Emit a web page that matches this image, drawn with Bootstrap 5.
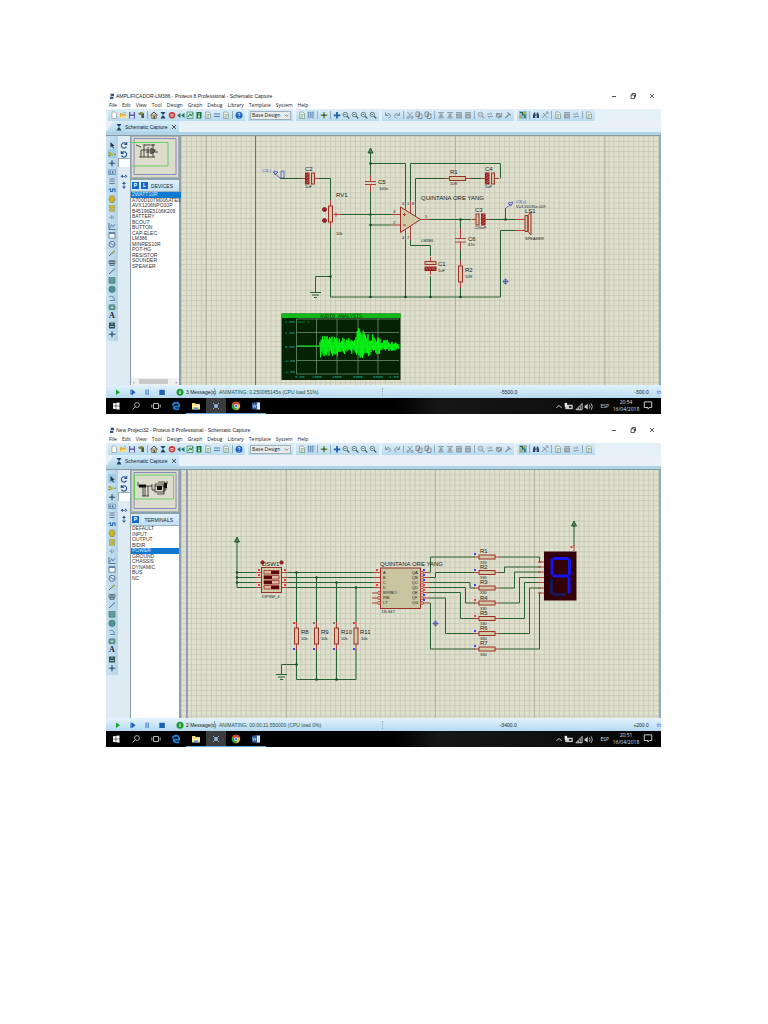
<!DOCTYPE html>
<html lang="en">
<head>
<meta charset="utf-8">
<meta name="viewport" content="width=device-width, initial-scale=1">
<title>Proteus 8 Professional - Schematic Capture</title>
<link href="https://cdn.jsdelivr.net/npm/bootstrap@5.3.0/dist/css/bootstrap.min.css" rel="stylesheet">
<style>
  body { background:#fff; font-family:"Open Sans","Liberation Sans",sans-serif; font-size:5px; line-height:8px; color:#333; }
  .sheet { padding:90px 107px 40px 106px; }
  .win { margin-bottom:10px; }
  .win button { background:none; border:0; padding:0; line-height:0; color:inherit; }
  .win svg { display:block; }
  .titlebar { height:11px; padding-left:2px; padding-right:5px; font-family:"Liberation Sans",sans-serif; color:#222; }
  .titlebar .controls { width:46px; }
  .titlebar .controls svg, .ico { width:8px; height:8px; }
  .menubar { height:8px; padding-left:3px; gap:5px; }
  .menubar a { color:#222; text-decoration:none; }
  .toolbar { height:12px; background:#e6f0f7; gap:3px; padding-left:2px; }
  .tgroup { height:12px; background:linear-gradient(#dcedf8,#b9dbef); padding:0 2px; gap:1px; }
  .tgroup .vr { width:1px; height:8px; min-height:0; align-self:center; margin:0 1px; background:#7f9db3; opacity:.8; }
  .tgroup select { width:41px; height:9px; font-size:5px; line-height:7px; padding:0 1px; border:1px solid #9fb0bb; border-radius:0; background:#e8ebed; color:#222; appearance:none; }
  .picker { position:relative; }
  .picker svg { position:absolute; right:1px; top:1px; pointer-events:none; }
  .win .hot { background:#9ccbe6; }
  .tabrow { height:11px; background:#e8f1f8; }
  .tabrow .doc-tab { width:73px; height:11px; gap:2px; padding-left:9px; background:linear-gradient(#d9edf9,#b4d8ee); clip-path:polygon(8px 0,100% 0,100% 100%,0 100%); font-family:"Liberation Sans",sans-serif; color:#123; }
  .rule { height:4px; background:#b1d3e6; border-bottom:1px solid #8799a3; }
  .work { background:#dfebf3; }
  .rail { width:12px; background:linear-gradient(90deg,#c8e2f1,#b2d4e8); padding:4px 0 3px; align-self:flex-start; }
  .rail button, .orient button { height:9px; }
  .win .letter { font:700 8px/9px "Liberation Serif",serif; color:#222233; }
  .orient { width:12px; padding-top:4px; }
  .orient input { width:12px; height:9px; border:1px solid #9aa9b2; border-right:0; border-bottom:0; padding:0; background:#fff; font-size:5px; }
  .side { width:51px; padding-left:1px; padding-right:2px; background:#8da1ad; }
  .preview { height:42px; background:#dcdccd; border:1px solid #a9b2b4; margin-bottom:2px; }
  .sidehead { height:11px; gap:2px; padding-left:1px; background:linear-gradient(#dff0fb,#bfe0f4); font-family:"Liberation Sans",sans-serif; color:#222; }
  .sidehead button { width:7px; height:7px; background:#1667d0; color:#fff; font-size:5px; line-height:7px; font-weight:700; }
  .sidehead .cap { margin-left:auto; margin-right:6px; }
  .picklist { background:#fff; border-top:1px solid #a4b2ba; }
  .rows { display:grid; grid-auto-rows:1fr; margin:0; padding:0; list-style:none; font-family:"Liberation Sans Narrow","Liberation Sans",sans-serif; font-size:5px; line-height:5px; color:#333; white-space:nowrap; }
  .rows li { padding-left:1px; }
  .rows.n14 { height:77px; }
  .rows.n10 { height:55px; }
  .rows .sel { background:#0f78d0; color:#cfe8ff; }
  .hbar { height:7px; background:#efefef; padding:0 2px; gap:2px; }
  .hbar .thumb { height:5px; background:#c9c9c9; margin-right:5px; margin-left:2px; }
  .plan { border-right:2px solid #8fadc4; background:#dedfcd; min-width:0; }
  .plan svg { width:100%; height:auto; }
  .statusbar { height:13px; background:linear-gradient(#e3f2fc,#b5d9ef); color:#222; font-family:"Liberation Sans Narrow","Liberation Sans",sans-serif; white-space:nowrap; }
  .runner { width:70px; padding-left:8px; padding-right:10px; }
  .msgs { width:39px; gap:2px; border-right:1px dotted #8fa6b5; }
  .anim { width:168px; padding-left:4px; color:#24533d; border-right:1px dotted #8fa6b5; }
  .taskbar { height:16px; background:linear-gradient(90deg,#000 0,#000 52%,#161616 60%,#101010 80%,#000 100%); color:#ddd; }
  .taskbar .app { width:20px; height:16px; display:flex; align-items:center; justify-content:center; }
  .taskbar .app.open { border-bottom:1px solid #6fa8d6; padding-top:1px; }
  .taskbar .app.front { background:#3a3d40; }
  .taskbar .ico { width:10px; height:10px; }
  .tray { gap:2px; padding-right:8px; }
  .clock { width:30px; line-height:7px; text-align:center; }
  .w { fill:none; stroke:#256333; stroke-width:1; }
  .p { fill:none; stroke:#b04038; stroke-width:1; }
  .b { fill:#d2c9a6; stroke:#9c3028; stroke-width:1; }
  .f { fill:#a31f20; stroke:#8c2020; stroke-width:1; }
  .j { fill:#16502a; }
  .q { fill:none; stroke:#4450b8; stroke-width:.8; }
  .t6 { font:6px "Liberation Sans",sans-serif; fill:#222; }
  .t4 { font:4px "Liberation Sans",sans-serif; fill:#222; }
</style>
</head>
<body>

<svg width="0" height="0" class="position-absolute" aria-hidden="true">
  <defs>
    <pattern id="grid" width="4.97" height="5.13" patternUnits="userSpaceOnUse" x="186" y="141"><path d="M0 .5H5M.5 0V5.2" fill="none" stroke="#c3c4b1" stroke-width=".7"/></pattern>
    <g id="vcc"><path class="w" d="M0 3V6"/><path d="M0 0L2.5 5H-2.5Z" fill="#4d8a58" stroke="#184f28" stroke-width=".9"/></g>
    <g id="gnd"><path class="w" d="M-5.500 0H5.500M-3.500 2.500H3.500M-1.500 5H1.500"/></g>
    <g id="resv"><path class="p" d="M0-14V-8M0 8V14"/><rect class="b" x="-2" y="-8" width="4" height="16"/></g>
    <g id="resh"><path class="p" d="M-13 0H-8M8 0H13"/><rect class="b" x="-8" y="-2" width="16" height="4"/></g>
    <g id="pcap"><path class="p" d="M-9 0H-4M4 0H9"/><rect class="f" x="-4.500" y="-5.500" width="3.500" height="11"/><path d="M-4-3l3-2M-4 0l3-2M-4 3l3-2M-4 5l3-2" stroke="#d8a898" stroke-width=".5"/><rect class="b" x="1.500" y="-5.500" width="3" height="11"/></g>
    <g id="origin"><circle class="q" r="2"/><path class="q" d="M-3 0H3M0-3V3"/></g>
  </defs>
  <symbol id="i-app" viewBox="0 0 8 8"><path d="M2 1h4v6H2z" fill="#bcd"/><path d="M3 2h3v2H3zM2 5h3v2H2z" fill="#357"/></symbol>
  <symbol id="i-min" viewBox="0 0 8 8"><path d="M2 4.500h4" stroke="#555"/></symbol>
  <symbol id="i-max" viewBox="0 0 8 8"><path d="M2 3h3.500v3.500H2zM3 3V1.500h3.500V5H5.500" fill="none" stroke="#444" stroke-width=".9"/></symbol>
  <symbol id="i-close" viewBox="0 0 8 8"><path d="M2 2l4 4M6 2L2 6" stroke="#444" stroke-width=".9"/></symbol>
  <symbol id="i-down" viewBox="0 0 8 8"><path d="M2 3l2 2 2-2" fill="none" stroke="#555" stroke-width=".8"/></symbol>
  <symbol id="i-new" viewBox="0 0 8 8"><path d="M2 1h3l1.500 1.500V7.500H2z" fill="#fff" stroke="#889" stroke-width=".6"/></symbol>
  <symbol id="i-open" viewBox="0 0 8 8"><path d="M1 2h2l1 1h3v4H1z" fill="#e3b13c"/><path d="M2.500 4.500H8L6.800 7H1z" fill="#ffe38a"/><path d="M4.500 1.500h2v1" stroke="#59a" fill="none" stroke-width=".6"/></symbol>
  <symbol id="i-save" viewBox="0 0 8 8"><path d="M1 1h6v6.500H1z" fill="#5a5bb0"/><path d="M2.300 1h3.500v2.500H2.300zM2 5h4v2.500H2z" fill="#dfe3f6"/></symbol>
  <symbol id="i-book" viewBox="0 0 8 8"><path d="M1 2l4-1 2 1v5H4V4H2z" fill="#7f8b45"/><path d="M5 3h2v4H5z" fill="#4b5c3a"/></symbol>
  <symbol id="i-home" viewBox="0 0 8 8"><path d="M.500 4.300L4 1l3.500 3.300" fill="none" stroke="#543" stroke-width="1"/><path d="M1.700 4h4.600v3.500H1.700z" fill="#e8d48c" stroke="#543" stroke-width=".6"/><path d="M3.500 5h1.500v2.500H3.500z" fill="#543"/></symbol>
  <symbol id="i-sch" viewBox="0 0 8 8"><path d="M1.500 1h5L5 3H3zM1.500 7.500h5L5 5H3z" fill="#246"/><path d="M3 3.300h2v1.500H3z" fill="#4a90a8"/></symbol>
  <symbol id="i-pcb" viewBox="0 0 8 8"><circle cx="4" cy="4.300" r="3.200" fill="#c33"/><path d="M2.500 3h3v2.800h-3z" fill="#fbd8d8"/><path d="M3.500 3.800h1.200v1.200H3.500z" fill="#a22"/></symbol>
  <symbol id="i-3d" viewBox="0 0 8 8"><path d="M0 4.300L3.500 2v5zM4 4.300L7.500 2v5z" fill="#1f7a63"/></symbol>
  <symbol id="i-chart" viewBox="0 0 8 8"><path d="M1 1h6v6.500H1z" fill="#c8e6d4" stroke="#386" stroke-width=".7"/><path d="M2 6l2-3 1 2 2-3" fill="none" stroke="#163" stroke-width=".8"/></symbol>
  <symbol id="i-bom" viewBox="0 0 8 8"><path d="M1.500 1h5v6.500h-5z" fill="#14733e"/><path d="M3 2.500h2v1H3zM3 4.500h2v2H3z" fill="#d6f0de"/></symbol>
  <symbol id="i-doc" viewBox="0 0 8 8"><path d="M1.700 1h3.300l1.500 1.500v5H1.700z" fill="#f2f5f0" stroke="#687" stroke-width=".6"/><path d="M2.700 3.500h3M2.700 5h3M2.700 6.300h2" stroke="#598a68" stroke-width=".6"/></symbol>
  <symbol id="i-lines" viewBox="0 0 8 8"><path d="M1 3h6M1 5.500h6" stroke="#4a72b8" stroke-width=".9"/></symbol>
  <symbol id="i-help" viewBox="0 0 8 8"><circle cx="4" cy="4.300" r="3.500" fill="#1b67bd"/><path d="M2.900 3.400Q3 2.200 4 2.200T5.100 3.300Q5 4 4 4.500v.7M4 6v.800" fill="none" stroke="#fff" stroke-width=".8"/></symbol>
  <symbol id="i-grid" viewBox="0 0 8 8"><path d="M0 0h8v8H0z" fill="#b5d3e7"/><path d="M1 2h6M1 4h6M1 6h6M1.500 1v6M3.500 1v6M5.500 1v6" stroke="#446a96" stroke-width=".6" stroke-dasharray="1 .6"/></symbol>
  <symbol id="i-plus-g" viewBox="0 0 8 8"><path d="M4 1v6.500M.800 4.300h6.500" stroke="#6c8a2e" stroke-width="1.400"/><circle cx="4" cy="4.300" r="1" fill="#345"/></symbol>
  <symbol id="i-plus-b" viewBox="0 0 8 8"><path d="M4 1v6.500M.800 4.300h6.500" stroke="#1e5ea8" stroke-width="1.700"/></symbol>
  <symbol id="i-zoom" viewBox="0 0 8 8"><circle cx="3.300" cy="3.500" r="2.200" fill="#dce8ee" stroke="#577" stroke-width=".9"/><path d="M5 5.200l2.300 2.300" stroke="#466" stroke-width="1.200"/><path d="M2.300 3.500h2" stroke="#356" stroke-width=".7"/></symbol>
  <symbol id="i-undo" viewBox="0 0 8 8"><path d="M1.500 1.500v3h3M1.700 4.300Q4 1 6 3.500T4.500 7" fill="none" stroke="#8799a6" stroke-width="1"/></symbol>
  <symbol id="i-redo" viewBox="0 0 8 8"><path d="M6.500 1.500v3h-3M6.300 4.300Q4 1 2 3.500T3.500 7" fill="none" stroke="#8799a6" stroke-width="1"/></symbol>
  <symbol id="i-cut" viewBox="0 0 8 8"><path d="M1.500 1l4 5M6.500 1l-4 5" stroke="#8b979f" stroke-width=".9"/><circle cx="2" cy="6.500" r="1" fill="none" stroke="#8b979f"/><circle cx="6" cy="6.500" r="1" fill="none" stroke="#8b979f"/></symbol>
  <symbol id="i-copy" viewBox="0 0 8 8"><path d="M1 1h3.500v4.500H1zM3.300 3h3.700v4.500H3.300z" fill="#dbe3e8" stroke="#6b7b88" stroke-width=".8"/></symbol>
  <symbol id="i-block" viewBox="0 0 8 8"><path d="M1 1h6v1.500H1zM1 3h6v4.500H1z" fill="#93a1ab"/><path d="M2.500 4h3v2h-3z" fill="#a9b6bf"/></symbol>
  <symbol id="i-blockx" viewBox="0 0 8 8"><path d="M1 1h6v1H1zM1 6.500h6v1H1zM2 2.500h4L5 4.300l1.500 2h-5L3 4.300z" fill="#93a1ab"/></symbol>
  <symbol id="i-pick" viewBox="0 0 8 8"><circle cx="3.500" cy="3.500" r="2.300" fill="#c3cdd4" stroke="#94a1ab" stroke-width=".9"/><path d="M5 5l2.300 2.300" stroke="#94a1ab" stroke-width="1.100"/></symbol>
  <symbol id="i-swap" viewBox="0 0 8 8"><path d="M1 3h5L4.500 1.500M7 5.500H2L3.500 7" fill="none" stroke="#8b99a3" stroke-width=".9"/></symbol>
  <symbol id="i-pack" viewBox="0 0 8 8"><path d="M1 2h6v4L4 7.500 1 6z" fill="#8d9aa3"/><path d="M2 5.500L6 2.500" stroke="#e0e8ec" stroke-width=".9"/></symbol>
  <symbol id="i-tool" viewBox="0 0 8 8"><path d="M1.500 7L5 3.500M3.500 1.500l3.500 3" stroke="#84919b" stroke-width="1.200"/></symbol>
  <symbol id="i-auto" viewBox="0 0 8 8"><path d="M0 0h8v8H0z" fill="#8fbdd8"/><path d="M1 1.500h2.500v2.500H6V7" fill="none" stroke="#1c6a3f" stroke-width="1.200"/><path d="M4.500 1h2v2h-2zM1 5h2v2H1z" fill="#c0a23a"/></symbol>
  <symbol id="i-find" viewBox="0 0 8 8"><path d="M1 4l1-2.500h1.300V7H1zM7 4L6 1.500H4.700V7H7zM3 3.500h2v1H3z" fill="#2c4560"/></symbol>
  <symbol id="i-prop" viewBox="0 0 8 8"><path d="M1 7l5-5.500M2 2l4.500 5M5 1h2v2" fill="none" stroke="#7f9099" stroke-width=".9"/></symbol>
  <symbol id="i-ptr" viewBox="0 0 8 8"><path d="M2.500 1v5.500L4 5.200 5 7.500l.900-.500-1-2H6.500z" fill="#234"/></symbol>
  <symbol id="i-comp" viewBox="0 0 8 8"><path d="M1.500 1.500L6 4.300 1.500 7z" fill="#b7b83b"/><path d="M0 3h2M0 5.500h2M6 4.300h2" stroke="#687a2c" stroke-width=".7"/></symbol>
  <symbol id="i-lbl" viewBox="0 0 8 8"><path d="M.500 2h7v4.500h-7z" fill="#b8d0e8" stroke="#5b86b8" stroke-width=".7"/><path d="M2 3.200v2h1.200M4.500 3.200v2H6" fill="none" stroke="#246" stroke-width=".7"/></symbol>
  <symbol id="i-text" viewBox="0 0 8 8"><path d="M1.500 2h5M1.500 4.200h5M1.500 6.500h5" stroke="#567" stroke-width=".8"/></symbol>
  <symbol id="i-bus" viewBox="0 0 8 8"><path d="M.500 3h2v2.500h2V3h2.500v3" fill="none" stroke="#2b6cae" stroke-width="1.100"/></symbol>
  <symbol id="i-sub" viewBox="0 0 8 8"><path d="M2 1h4v2.300h1v2H6v2.200H2V5.300H1v-2h1z" fill="#d0b62c" stroke="#84761d" stroke-width=".5"/></symbol>
  <symbol id="i-term" viewBox="0 0 8 8"><path d="M1.500 1.500h5V4h-5zM1.500 5h5v2.300h-5z" fill="#d3c13b" stroke="#8a8330" stroke-width=".5"/></symbol>
  <symbol id="i-pin" viewBox="0 0 8 8"><path d="M1 4.300h2.500M3.500 2.500L6 4.300 3.500 6z" fill="#cfdbe4" stroke="#7a8d9b" stroke-width=".7"/></symbol>
  <symbol id="i-graph" viewBox="0 0 8 8"><path d="M1 1v6.500h6.500" fill="none" stroke="#456" stroke-width=".8"/><path d="M2 6l1.500-3.500L5 5l2-3" fill="none" stroke="#4a72b8" stroke-width=".8"/></symbol>
  <symbol id="i-tape" viewBox="0 0 8 8"><path d="M1 1.500h6v5.800H1z" fill="#f3f7fa" stroke="#567" stroke-width=".7"/><path d="M1 1.500h6V3H1z" fill="#5a7fae"/></symbol>
  <symbol id="i-gen" viewBox="0 0 8 8"><circle cx="4" cy="4.300" r="3" fill="#d7e4ef" stroke="#3d5f8c" stroke-width=".8"/><path d="M2 4.300q1-2 2 0t2 0" fill="none" stroke="#346" stroke-width=".8"/></symbol>
  <symbol id="i-probe" viewBox="0 0 8 8"><path d="M1 7l2-2" stroke="#446" stroke-width=".8"/><path d="M3 5l3.500-3" stroke="#9b9b3a" stroke-width="1.500"/></symbol>
  <symbol id="i-inst" viewBox="0 0 8 8"><path d="M1 2.500h6v3H1zM2 5.500h4v2H2z" fill="#b5c0c8" stroke="#4c5a66" stroke-width=".7"/><path d="M2 3.300h4v1H2z" fill="#567"/></symbol>
  <symbol id="i-line" viewBox="0 0 8 8"><path d="M1 7l6-5.500" stroke="#345" stroke-width=".8"/></symbol>
  <symbol id="i-box" viewBox="0 0 8 8"><path d="M1 1.500h6v5.800H1z" fill="#5f9e96" stroke="#3d7772" stroke-width=".6"/></symbol>
  <symbol id="i-circ" viewBox="0 0 8 8"><circle cx="4" cy="4.300" r="3.200" fill="#4f938f" stroke="#356e70" stroke-width=".6"/></symbol>
  <symbol id="i-arc" viewBox="0 0 8 8"><path d="M1.500 2.500Q6 1 6.500 6.500H2" fill="none" stroke="#4a7290" stroke-width=".8"/></symbol>
  <symbol id="i-path" viewBox="0 0 8 8"><path d="M1 3q0-2 3-1 3-1 3 1v2.500q0 2-3 1-3 1-3-1z" fill="#6aa69c" stroke="#2f6b68" stroke-width=".7"/><path d="M3 4.300h2" stroke="#fff" stroke-width=".8"/></symbol>
  <symbol id="i-sym" viewBox="0 0 8 8"><path d="M1 1.500h6v6H1z" fill="#345356"/><path d="M2 5.500h4M3 3h2" stroke="#bcd" stroke-width=".8"/></symbol>
  <symbol id="i-mark" viewBox="0 0 8 8"><path d="M4 1v6.500M.800 4.300h6.500" stroke="#3d6079" stroke-width="1.100"/><circle cx="4" cy="4.300" r="1.300" fill="#3d6079"/></symbol>
  <symbol id="i-cw" viewBox="0 0 8 8"><path d="M6 2.600A2.700 2.700 0 1 0 6.500 5.500M6.700 1v2.400H4.300" fill="none" stroke="#28559a" stroke-width="1.100"/></symbol>
  <symbol id="i-ccw" viewBox="0 0 8 8"><path d="M2 2.600A2.700 2.700 0 1 1 1.500 5.500M1.300 1v2.400h2.400" fill="none" stroke="#28559a" stroke-width="1.100"/></symbol>
  <symbol id="i-fliph" viewBox="0 0 8 8"><path d="M.500 4.300L3 2.500v3.600zM7.500 4.300L5 2.500v3.600zM2 4h4v.8H2z" fill="#2a5b9e"/></symbol>
  <symbol id="i-flipv" viewBox="0 0 8 8"><path d="M4 .500L6 3H2zM4 8L6 5.500H2zM3.600 2h.8v4h-.8z" fill="#2a5b9e"/></symbol>
  <symbol id="i-play" viewBox="0 0 8 8"><path d="M2 1.500L6 4.300 2 7z" fill="#15a82c"/></symbol>
  <symbol id="i-step" viewBox="0 0 8 8"><path d="M1.500 1.500h1.200v5.500H1.500zM3 1.500l3.500 2.800L3 7z" fill="#1961b4"/></symbol>
  <symbol id="i-pause" viewBox="0 0 8 8"><path d="M2.300 1.500h1.500V7H2.300zM4.500 1.500H6V7H4.500z" fill="#5d9bd6"/></symbol>
  <symbol id="i-stop" viewBox="0 0 8 8"><path d="M1.300 1.800h5.500V7H1.300z" fill="#1961b4"/></symbol>
  <symbol id="i-info" viewBox="0 0 8 8"><circle cx="4" cy="4.300" r="3.500" fill="#1e9a30"/><path d="M4 2.600v3.400" stroke="#fff"/></symbol>
  <symbol id="i-win" viewBox="0 0 10 10"><path d="M2 2.300l2.700-.4v2.900H2zM5.200 1.800L8.500 1.400v3.400H5.200zM2 5.300h2.700v2.900L2 7.800zM5.200 5.300h3.300v3.400l-3.300-.4z" fill="#fff"/></symbol>
  <symbol id="i-search" viewBox="0 0 10 10"><circle cx="6" cy="4" r="2.400" fill="none" stroke="#bbb" stroke-width=".9"/><path d="M4.300 5.700L1.700 8.500" stroke="#bbb"/></symbol>
  <symbol id="i-views" viewBox="0 0 10 10"><path d="M2.500 2.500h5v5h-5zM.800 3.500v3M9.200 3.500v3" fill="none" stroke="#ccc" stroke-width=".9"/></symbol>
  <symbol id="i-edge" viewBox="0 0 10 10"><path d="M2.300 5.600H8.300Q8.300 1.700 5.200 1.700 2.600 1.700 1.500 4.300M2.500 5.400Q2.800 8.400 5.600 8.400 7 8.400 8 7.700" fill="none" stroke="#1a86e0" stroke-width="1.700"/></symbol>
  <symbol id="i-files" viewBox="0 0 10 10"><path d="M1 2h3l1 1h4v5.500H1z" fill="#f5d877"/><path d="M1 4.500h8v1.800H1z" fill="#fdf0b8"/><path d="M3 6.500h4v2H3z" fill="#4f9ad0"/></symbol>
  <symbol id="i-proteus" viewBox="0 0 10 10"><circle cx="5" cy="5" r="2" fill="#8bb4da"/><path d="M2 2l1.500 1.500M8 2L6.500 3.500M2 8l1.500-1.500M8 8L6.500 6.500" stroke="#9ab" stroke-width="1"/></symbol>
  <symbol id="i-chrome" viewBox="0 0 10 10"><circle cx="5" cy="5" r="4.200" fill="#e2c22e"/><path d="M1.200 3.200A4.200 4.200 0 0 1 9 3.500H5L3.500 6z" fill="#d9402f"/><path d="M1.200 3.200A4.200 4.200 0 0 0 5 9.200L6.500 6 3.500 6z" fill="#2f9e4a"/><circle cx="5" cy="5" r="1.900" fill="#fff"/><circle cx="5" cy="5" r="1.400" fill="#3f7fe0"/></symbol>
  <symbol id="i-word" viewBox="0 0 10 10"><path d="M5 1.500h4v7H5z" fill="#e8eefa"/><path d="M1 1.800L6 1v8L1 8.200z" fill="#2a579a"/><path d="M1.900 3.500l.7 3 .9-2.500.9 2.500.7-3M7 3.500h1.500M7 5h1.500M7 6.500h1.500" fill="none" stroke="#bcd0f0" stroke-width=".7"/></symbol>
  <symbol id="i-up" viewBox="0 0 8 8"><path d="M2 5.500L4 3.500l2 2" fill="none" stroke="#ddd" stroke-width=".8"/></symbol>
  <symbol id="i-batt" viewBox="0 0 8 8"><path d="M1 3h6v3.500H1z" fill="#ccc"/><path d="M.500 1.500h2v3h-2z" fill="#eee"/><path d="M4 4h2v1.500H4z" fill="#222"/></symbol>
  <symbol id="i-net" viewBox="0 0 8 8"><path d="M1.500 7L6.500 2v5z" fill="none" stroke="#ccc" stroke-width=".8"/><path d="M3.500 5.500V7M5 4v3" stroke="#ccc" stroke-width=".7"/></symbol>
  <symbol id="i-vol" viewBox="0 0 8 8"><path d="M.500 3.500h1L3 2v5L1.500 5.500h-1z" fill="#ccc"/><path d="M4.300 3q1 1.500 0 3M5.800 2q1.700 2.500 0 5" fill="none" stroke="#ccc" stroke-width=".7"/></symbol>
  <symbol id="i-note" viewBox="0 0 8 8"><path d="M1 1.500h6V6H5L4 7.300V6H1z" fill="none" stroke="#ccc" stroke-width=".8"/></symbol>
</svg>

<main class="sheet container-fluid">

  <section class="win" aria-label="Amplifier project">
    <header class="titlebar d-flex align-items-center">
      <svg class="ico"><use href="#i-app"/></svg><span class="text-nowrap flex-grow-1">AMPLIFICADOR-LM386 - Proteus 8 Professional - Schematic Capture</span>
      <div class="controls d-flex justify-content-between" data-icons="min max close"></div>
    </header>
    <div data-part="chrome"></div>
    <div class="work d-flex">
      <div class="rail d-flex flex-column align-items-center" data-part="rail"></div>
      <div class="orient d-flex flex-column align-items-center" data-part="orient"></div>
      <aside class="side d-flex flex-column flex-shrink-0">
        <div class="preview"><svg width="46" height="40" viewBox="132 137 46 40"><path d="M134 138.500h42v36h-42z" fill="none" stroke="#7474bd" stroke-width=".8"/><path d="M131 142.500h37v23.500h-37z" fill="none" stroke="#57cf52" stroke-width=".9"/><path d="M136 145l5 2M141 150h15M144 144v13M148 147v10M153 144v13M139 157h16M144 145h11M146 152h12M151 148l4 3-4 3zM141 150v7" fill="none" stroke="#222" stroke-width=".8"/></svg></div>
        <div class="sidehead d-flex align-items-center"><button type="button">P</button><button type="button">L</button><span class="cap">DEVICES</span></div>
        <div class="picklist flex-grow-1 d-flex flex-column">
          <ul class="rows n14"><li class="sel">2WATT10R</li><li>A700D107M006ATE01</li><li>AVX1206NPO10P</li><li>B45196E5106K209</li><li>BATTERY</li><li>BCOUT</li><li>BUTTON</li><li>CAP-ELEC</li><li>LM386</li><li>MINRES10R</li><li>POT-HG</li><li>RESISTOR</li><li>SOUNDER</li><li>SPEAKER</li></ul>
          <div class="hbar mt-auto d-flex align-items-center"><span>‹</span><span class="thumb flex-grow-1"></span><span>›</span></div>
        </div>
      </aside>
      <div class="plan flex-grow-1">
        <svg viewBox="181 136 478 249" role="img" aria-label="Audio amplifier schematic">
          <rect x="181" y="136" width="478" height="249" fill="url(#grid)"/>
          <path d="M206 136V385M455.500 136V385M605 136V385" stroke="#a5a793" stroke-width=".7"/>
          <path d="M255.500 136V385" stroke="#6464b4" stroke-width="1"/>
          <path class="w" d="M280 178.500H302M319 178.500H330.500V201M370.500 153V175M370.500 163.500H405.500V201M410.500 201V163.500H500.500V178.500M415.500 201V178.500H445M470 178.500H481M370.500 192V297M340 214.500H391M370.500 225H391M330.500 226V297H500.500V230.500H515M405.500 240V297M410.500 240V245.500H430.500V256M430.500 276V297M430 219.500H471M489 219.500H515M460.500 219.500V229M460.500 250V260M460.500 288V297M330.500 276.500H315.500V292M505.500 219V208"/>
          <use href="#vcc" x="370.500" y="148"/><use href="#gnd" x="315.500" y="292.500"/>
          <use href="#pcap" x="310" y="178.500"/><use href="#pcap" x="490" y="178.500"/><use href="#pcap" transform="translate(480.500 219.500) rotate(180)"/><use href="#pcap" transform="translate(430.500 266) rotate(-90)"/>
          <use href="#resh" x="457.500" y="178.500"/><use href="#resv" x="460.500" y="274"/><use href="#resv" x="330.500" y="214"/>
          <path class="p" d="M341 214.500H333.500M336 212.500v4M370.500 175V181.500M365 181.500H376M365 184.500H376M370.500 184.500V192M460.500 228V238M455 238.500H466M455 242H466M460.500 242V250M391 214.500H400M391 225H400M405.500 201V211M410.500 201V214M415.500 201V217M405.500 229V240M410.500 226V240M420 219.500H430M515 219.500H525M515 230.500H525"/>
          <circle class="f" cx="324.500" cy="209.500" r="2"/><circle class="f" cx="324.500" cy="220.500" r="2"/>
          <path class="b" d="M400.500 207V232.500L420.500 219.500Z"/><path class="p" d="M403 214.500h3M404.500 213v3M403 225h3"/>
          <path class="b" d="M525 215.500H528V231.500H525ZM528 215.500L531 212V235L528 231.500Z"/>
          <g class="j"><circle cx="370.500" cy="163.500" r="1.300"/><circle cx="370.500" cy="214.500" r="1.300"/><circle cx="370.500" cy="225" r="1.300"/><circle cx="330.500" cy="276.500" r="1.300"/><circle cx="370.500" cy="297" r="1.300"/><circle cx="405.500" cy="297" r="1.300"/><circle cx="430.500" cy="297" r="1.300"/><circle cx="460.500" cy="297" r="1.300"/><circle cx="460.500" cy="219.500" r="1.300"/><circle cx="505.500" cy="219.500" r="1.300"/></g>
          <path class="q" d="M281 171v7h3v-7zM273 172l7 6M274 171l4 1-3 3zM506 208l5-4M508 203l5-1-2 4z"/><use href="#origin" x="505.500" y="281.500"/>
          <g class="t6"><text x="305" y="171">C2</text><text x="336" y="197">RV1</text><text x="378" y="184">C5</text><text x="450" y="174">R1</text><text x="485" y="171">C4</text><text x="421" y="200">QUINTANA ORE YANG</text><text x="475" y="212">C3</text><text x="468" y="241">C6</text><text x="438" y="266">C1</text><text x="465" y="272">R2</text><text x="525" y="213">LS1</text></g>
          <g class="t4"><text x="305" y="188">1uF</text><text x="336" y="235">10k</text><text x="379" y="190">100n</text><text x="450" y="185">10R</text><text x="485" y="188">1uF</text><text x="421" y="242">LM386</text><text x="475" y="229">220uF</text><text x="468" y="246">47n</text><text x="438" y="272">1uF</text><text x="465" y="278">10R</text><text x="525" y="240">SPEAKER</text><text x="516" y="208">V=3.30135e-009</text><text x="393" y="213">3</text><text x="393" y="224">2</text><text x="425" y="218">5</text><text x="402" y="205">6</text><text x="407" y="205">1</text><text x="412" y="205">8</text><text x="402" y="239">4</text><text x="407" y="239">7</text></g>
          <g class="t4" style="fill:#3c48c0"><text x="262" y="172">C2(-)</text><text x="516" y="203">C3(+)</text></g>
          <rect x="281.500" y="313.500" width="119" height="66.500" fill="#042204"/><rect x="281.500" y="313.500" width="119" height="4.500" fill="#10b818"/>
          <text x="341" y="317.500" text-anchor="middle" font-family="DejaVu Sans Mono,monospace" font-size="5" fill="#053c08">AUDIO ANALYSIS</text>
          <path d="M296.500 319V374H399M296.500 319H399M316.500 319V374M337 319V374M358 319V374M378 319V374M296.500 332.500H399M296.500 346.500H399M296.500 360.500H399" fill="none" stroke="#7f9b80" stroke-width=".7"/>
          <path id="wave" fill="none" stroke="#08f414" stroke-width="1"/>
          <g font-family="Liberation Mono,monospace" font-size="4" fill="#1cb5a5"><text x="285" y="323">2.00</text><text x="285" y="334">1.00</text><text x="285" y="348">0.00</text><text x="283" y="362">-1.00</text><text x="283" y="373">-2.00</text><text x="295" y="378">0.00</text><text x="312" y="378">200m</text><text x="332" y="378">400m</text><text x="353" y="378">600m</text><text x="373" y="378">800m</text><text x="389" y="378">1.00</text><text x="298" y="323" fill="#19a020">OUT-1</text></g>
        </svg>
      </div>
    </div>
    <footer class="statusbar d-flex align-items-center">
      <div class="runner d-flex justify-content-between" data-icons="play step pause stop"></div>
      <div class="msgs d-flex align-items-center"><svg class="ico flex-shrink-0"><use href="#i-info"/></svg>3 Message(s)</div>
      <div class="anim">ANIMATING: 0.250085145s (CPU load 51%)</div>
      <div class="d-flex flex-grow-1"><span class="flex-grow-1 text-center">-5500.0</span><span>-500.0</span><span class="ms-2 text-primary">th</span></div>
    </footer>
    <div data-part="taskbar" data-time="20:54"></div>
  </section>

  <section class="win" aria-label="Display driver project">
    <header class="titlebar d-flex align-items-center">
      <svg class="ico"><use href="#i-app"/></svg><span class="text-nowrap flex-grow-1">New Project32 - Proteus 8 Professional - Schematic Capture</span>
      <div class="controls d-flex justify-content-between" data-icons="min max close"></div>
    </header>
    <div data-part="chrome"></div>
    <div class="work d-flex">
      <div class="rail d-flex flex-column align-items-center" data-part="rail"></div>
      <div class="orient d-flex flex-column align-items-center" data-part="orient"></div>
      <aside class="side d-flex flex-column flex-shrink-0">
        <div class="preview"><svg width="46" height="40" viewBox="132 471 46 40"><path d="M134 472.500h42v36h-42z" fill="none" stroke="#7474bd" stroke-width=".8"/><path d="M134.500 475h39v24h-39z" fill="none" stroke="#57cf52" stroke-width=".9"/><path d="M138 482v4h14M143 486v10M145 487v9M148 486v10M142 496h7M155 484h9v8h-9zM155 486h11v4M158 482h7v9M152 484v6h3M157 494h7v-8M167 481v3" fill="none" stroke="#222" stroke-width=".8"/><path d="M139 484.500h7v3h-7zM157 486h5v4h-5zM164 483h3v5h-3z" fill="#111"/></svg></div>
        <div class="sidehead d-flex align-items-center"><button type="button">P</button><span class="cap">TERMINALS</span></div>
        <div class="picklist flex-grow-1">
          <ul class="rows n10"><li>DEFAULT</li><li>INPUT</li><li>OUTPUT</li><li>BIDIR</li><li class="sel">POWER</li><li>GROUND</li><li>CHASSIS</li><li>DYNAMIC</li><li>BUS</li><li>NC</li></ul>
        </div>
      </aside>
      <div class="plan flex-grow-1">
        <svg viewBox="181 470 478 248" role="img" aria-label="Seven-segment display schematic">
          <rect x="181" y="470" width="478" height="248" fill="url(#grid)"/>
          <path d="M286.500 470V718M435.500 470V718M534.500 470V718" stroke="#a5a793" stroke-width=".7"/>
          <path d="M187 470V718" stroke="#6464b4" stroke-width="1"/>
          <path class="w" d="M237 541V587.500M237 572.500H257M237 577.500H257M237 582.500H257M237 587.500H257M287 572.500H375M287 577.500H375M287 582.500H375M287 587.500H375M296.500 572.500V622M316.500 577.500V622M336.500 582.500V622M356 587.500V622M296.500 649V679.500H356V649M316.500 649V679.500M336.500 649V679.500M296.500 664.500H281.500V674"/>
          <path class="w" d="M430.500 572.500V557H475M430 577.500H435.500V572.500H475M430 582.500H470V588H475M430 587.500H465.500V603H475M430 592.500H460.500V618.500H475M430 598H445.500V633.500H475M430.500 603V649H475M500 557H539.500V562H541M500 572.500H504.500V567H541M500 588H514.500V572H541M500 603H519.500V577.500H541M500 618.500H524.500V582.500H541M500 633.500H529.500V588H541M500 649H539.500V593H541M574 525V546"/>
          <use href="#vcc" x="237" y="537"/><use href="#vcc" x="574" y="521"/><use href="#gnd" x="281.500" y="674.500"/>
          <path class="p" d="M255 572.500H261M255 577.500H261M255 582.500H261M255 587.500H261M281 572.500H288M281 577.500H288M281 582.500H288M281 587.500H288M373 572.500H380M373 577.500H380M373 582.500H380M373 587.500H380M372 593H378M372 598H378M372 603H378M420 572.500H430M420 577.500H430M420 582.500H430M420 587.500H430M420 592.500H430M420 598H430M420 603H430M538 562H545M538 567H545M538 572H545M538 577.500H545M538 582.500H545M538 588H545M538 593H545M574 545V551"/>
          <rect class="b" x="261.500" y="567.500" width="20" height="25"/>
          <path d="M264 570.500h15v3.500h-15zM264 575.500h15v3.500h-15zM264 580.500h15v3.500h-15zM264 585.500h15v3.500h-15z" fill="#e2b7a0" stroke="#8c2020" stroke-width=".7"/><path d="M271 571h8v3h-8zM264 576h8v3h-8zM264 581h8v3h-8zM271 586h8v3h-8z" fill="#5b0b10"/>
          <circle class="f" cx="262.500" cy="562.500" r="1.700"/><circle class="f" cx="281.500" cy="562.500" r="1.700"/>
          <rect class="b" x="380.500" y="568" width="40" height="40.500" style="fill:#c9c5a0"/>
          <g fill="#d9c7b0" stroke="#a03028" stroke-width=".7"><circle cx="379" cy="593" r="1.500"/><circle cx="379" cy="598" r="1.500"/><circle cx="379" cy="603" r="1.500"/><circle cx="422" cy="572.500" r="1.500"/><circle cx="422" cy="577.500" r="1.500"/><circle cx="422" cy="582.500" r="1.500"/><circle cx="422" cy="587.500" r="1.500"/><circle cx="422" cy="592.500" r="1.500"/><circle cx="422" cy="598" r="1.500"/><circle cx="422" cy="603" r="1.500"/></g>
          <use href="#resv" x="296.500" y="636"/><use href="#resv" x="316.500" y="636"/><use href="#resv" x="336.500" y="636"/><use href="#resv" x="356" y="636"/>
          <use href="#resh" x="487" y="557"/><use href="#resh" x="487" y="572.500"/><use href="#resh" x="487" y="588"/><use href="#resh" x="487" y="603"/><use href="#resh" x="487" y="618.500"/><use href="#resh" x="487" y="633.500"/><use href="#resh" x="487" y="649"/>
          <g class="j"><circle cx="237" cy="572.500" r="1.300"/><circle cx="237" cy="577.500" r="1.300"/><circle cx="237" cy="582.500" r="1.300"/><circle cx="296.500" cy="572.500" r="1.300"/><circle cx="316.500" cy="577.500" r="1.300"/><circle cx="336.500" cy="582.500" r="1.300"/><circle cx="356" cy="587.500" r="1.300"/><circle cx="296.500" cy="664.500" r="1.300"/><circle cx="316.500" cy="679.500" r="1.300"/><circle cx="336.500" cy="679.500" r="1.300"/></g>
          <path d="M293 622h2v2h-2zM353 622h2v2h-2zM474 599h2v2h-2zM474 615h2v2h-2zM570.500 546h2v2h-2zM258 569h2v2h-2zM258 574h2v2h-2zM258 584h2v2h-2zM284 569h2v2h-2zM284 579h2v2h-2zM284 584h2v2h-2zM376 569h2v2h-2zM376 584h2v2h-2zM423 584h2v2h-2zM423 589h2v2h-2z" fill="#f03c3c"/>
          <path d="M293 648h2v2h-2zM313 648h2v2h-2zM333 648h2v2h-2zM353 648h2v2h-2zM474 553h2v2h-2zM474 569h2v2h-2zM474 584h2v2h-2zM474 630h2v2h-2zM474 645h2v2h-2zM423 569h2v2h-2zM423 574h2v2h-2zM423 579h2v2h-2zM423 594h2v2h-2zM423 599h2v2h-2z" fill="#4444f0"/>
          <path d="M313 622h2v2h-2zM333 622h2v2h-2z" fill="#777"/>
          <rect x="544" y="551.500" width="32.500" height="49" fill="#330006"/>
          <path d="M551.500 579V592L554 594.500H566" fill="none" stroke="#17175c" stroke-width="3"/><path d="M554 558.500H568M552 560V574M569.500 560V574M554 576H568M569 578V592" fill="none" stroke="#1414f0" stroke-width="3" stroke-linecap="round"/>
          <use href="#origin" x="435.500" y="623.500"/>
          <g class="t6"><text x="262" y="566">DSW1</text><text x="380" y="566">QUINTANA ORE YANG</text><text x="301" y="634">R8</text><text x="321" y="634">R9</text><text x="341" y="634">R10</text><text x="360" y="634">R11</text><text x="480" y="553">R1</text><text x="480" y="569">R2</text><text x="480" y="584">R3</text><text x="480" y="600">R4</text><text x="480" y="615">R5</text><text x="480" y="630">R6</text><text x="480" y="645">R7</text></g>
          <g class="t4"><text x="262" y="598">DIPSW_4</text><text x="381" y="613">74LS47</text><text x="301" y="640">10k</text><text x="321" y="640">10k</text><text x="341" y="640">10k</text><text x="361" y="640">10k</text><text x="480" y="564">330</text><text x="480" y="579">330</text><text x="480" y="594">330</text><text x="480" y="610">330</text><text x="480" y="625">330</text><text x="480" y="640">330</text><text x="480" y="656">330</text>
            <text x="383" y="574">A</text><text x="383" y="579">B</text><text x="383" y="584">C</text><text x="383" y="589">D</text><text x="383" y="594">BI/RBO</text><text x="383" y="599">RBI</text><text x="383" y="604">LT</text>
            <text x="412" y="574">QA</text><text x="412" y="579">QB</text><text x="412" y="584">QC</text><text x="412" y="589">QD</text><text x="412" y="594">QE</text><text x="412" y="599">QF</text><text x="412" y="604">QG</text></g>
        </svg>
      </div>
    </div>
    <footer class="statusbar d-flex align-items-center">
      <div class="runner d-flex justify-content-between" data-icons="play step pause stop"></div>
      <div class="msgs d-flex align-items-center"><svg class="ico flex-shrink-0"><use href="#i-info"/></svg>2 Message(s)</div>
      <div class="anim">ANIMATING: 00:00:11.550000 (CPU load 0%)</div>
      <div class="d-flex flex-grow-1"><span class="flex-grow-1 text-center">-3400.0</span><span>+200.0</span><span class="ms-2 text-primary">th</span></div>
    </footer>
    <div data-part="taskbar" data-time="20:51"></div>
  </section>
</main>

<template id="chrome">
  <nav class="menubar d-flex align-items-center" aria-label="Menu"><a href="#">File</a><a href="#">Edit</a><a href="#">View</a><a href="#">Tool</a><a href="#">Design</a><a href="#">Graph</a><a href="#">Debug</a><a href="#">Library</a><a href="#">Template</a><a href="#">System</a><a href="#">Help</a></nav>
  <div class="toolbar d-flex">
    <div class="tgroup d-flex align-items-center" data-icons="new open save book | home sch pcb 3d chart bom doc lines doc | help"></div>
    <div class="tgroup d-flex align-items-center"><div class="picker"><select class="d-block" aria-label="Design variant"><option>Base Design</option></select><svg width="7" height="7"><use href="#i-down"/></svg></div></div>
    <div class="tgroup d-flex align-items-center" data-icons="doc grid | plus-g | plus-b zoom zoom zoom zoom"></div>
    <div class="tgroup d-flex align-items-center" data-icons="undo redo | cut copy copy | blockx blockx block block | pick swap pack tool"></div>
    <div class="tgroup d-flex align-items-center" data-icons="auto | find prop | doc block swap | doc"></div>
  </div>
  <div class="tabrow"><div class="doc-tab d-flex align-items-center"><svg class="ico"><use href="#i-sch"/></svg><span>Schematic Capture</span><button type="button" aria-label="Close tab"><svg class="ico"><use href="#i-close"/></svg></button></div></div>
  <div class="rule"></div>
</template>

<template id="taskbar">
  <div class="taskbar d-flex align-items-center">
    <button class="app" type="button" aria-label="Start"><svg class="ico"><use href="#i-win"/></svg></button><button class="app" type="button" aria-label="Search"><svg class="ico"><use href="#i-search"/></svg></button><button class="app" type="button" aria-label="Task view"><svg class="ico"><use href="#i-views"/></svg></button><button class="app" type="button" aria-label="Edge"><svg class="ico"><use href="#i-edge"/></svg></button><button class="app open" type="button" aria-label="Files"><svg class="ico"><use href="#i-files"/></svg></button><button class="app open front" type="button" aria-label="Proteus"><svg class="ico"><use href="#i-proteus"/></svg></button><button class="app open" type="button" aria-label="Chrome"><svg class="ico"><use href="#i-chrome"/></svg></button><button class="app open" type="button" aria-label="Word"><svg class="ico"><use href="#i-word"/></svg></button>
    <div class="tray d-flex align-items-center ms-auto"><span class="d-flex me-1" data-icons="up batt net vol"></span><span>ESP</span><div class="clock"><div class="time"></div><div>16/04/2018</div></div><span data-icons="note"></span></div>
  </div>
</template>

<script src="https://cdn.jsdelivr.net/npm/bootstrap@5.3.0/dist/js/bootstrap.bundle.min.js"></script>
<script>
  // Shared parts of both windows
  for (const slot of document.querySelectorAll('[data-part=chrome],[data-part=taskbar]')) {
    slot.append(document.getElementById(slot.dataset.part).content.cloneNode(true));
    if (slot.dataset.time) slot.querySelector('.time').textContent = slot.dataset.time;
  }
  const button = name => name === 'A'
    ? '<button type="button" class="letter">A</button>'
    : `<button type="button" aria-label="${name}"><svg class="ico"><use href="#i-${name}"/></svg></button>`;
  for (const bar of document.querySelectorAll('[data-icons]'))
    bar.innerHTML = bar.dataset.icons.split(' ').map(n => n === '|' ? '<span class="vr"></span>' : button(n)).join('');
  const tools = 'ptr comp mark lbl text bus sub term pin graph tape gen probe inst line box circ arc path A sym mark'.split(' ');
  document.querySelectorAll('[data-part=rail]').forEach((rail, n) => {
    rail.innerHTML = tools.map(button).join('');
    rail.children[n ? 0 : 1].classList.add('hot');
  });
  for (const o of document.querySelectorAll('[data-part=orient]'))
    o.innerHTML = button('cw') + button('ccw') + '<input type="text" aria-label="Rotation angle">' + '<div class="pt-1"></div>' + button('fliph') + button('flipv');

  // Audio trace: [x, height above, depth below] envelope, filled with repeatable noise
  const env = [[320,12,12],[328,11,12],[340,8,10],[347,9,8],[354,7,8],[357,20,13],[361,17,16],[370,13,10],[380,8,8],[390,6,5],[399,4,4]];
  let d = 'M297 346H320', seed = 7;
  for (let x = 320, i = 0; x <= 399; x += .6, i++) {
    const k = env.findIndex(e => e[0] >= x), b = env[k], a = env[Math.max(0, k - 1)];
    const t = b[0] === a[0] ? 0 : (x - a[0]) / (b[0] - a[0]);
    seed = (seed * 16807) % 2147483647;
    const r = .35 + .65 * seed / 2147483647, s = i % 2 ? 2 : 1;
    const h = (a[s] + (b[s] - a[s]) * t) * r;
    d += `L${x.toFixed(1)} ${(346 + (i % 2 ? h : -h)).toFixed(1)}`;
  }
  document.getElementById('wave').setAttribute('d', d);
</script>
</body>
</html>
